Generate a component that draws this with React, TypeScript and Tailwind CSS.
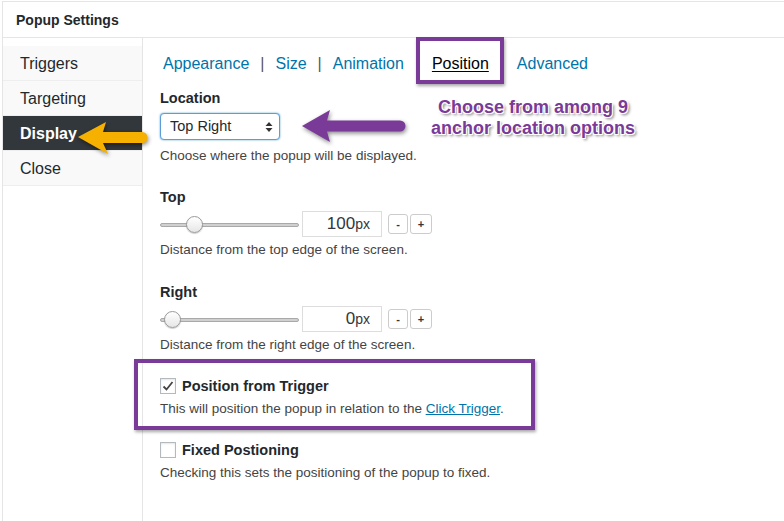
import React from "react"

const navItems = ["Triggers", "Targeting", "Display", "Close"]

function Slider({ pos }: { pos: number }) {
  return (
    <div className="relative h-[26px] w-[139px]">
      <div className="absolute left-0 right-0 top-[12px] h-[4px] rounded-full border border-[#a9a9a9] bg-[#d0d0d0]" />
      <div
        className="absolute top-[5px] h-[17px] w-[17px] rounded-full border border-[#9a9a9a] bg-gradient-to-b from-white to-[#e6e6e6] shadow-[0_1px_1px_rgba(0,0,0,0.2)]"
        style={{ left: pos }}
      />
    </div>
  )
}

function NumberRow({ value, pos }: { value: string; pos: number }) {
  return (
    <div className="mt-[4px] flex h-[26px] items-center">
      <Slider pos={pos} />
      <div className="ml-[3px] flex h-[26px] w-[80px] items-baseline justify-end border border-[#dddddd] bg-white pr-[11px] pt-[1px]">
        <span className="text-[17px] leading-[22px] text-[#32373c]">{value}</span>
        <span className="text-[14px] text-[#32373c]">px</span>
      </div>
      <button className="ml-[6px] flex h-[20px] w-[20px] items-center justify-center rounded-[3px] border border-[#cccccc] bg-white text-[11px] font-bold leading-none text-[#32373c]">
        -
      </button>
      <button className="ml-[2px] flex h-[20px] w-[22px] items-center justify-center rounded-[3px] border border-[#cccccc] bg-white text-[11px] font-bold leading-none text-[#32373c]">
        +
      </button>
    </div>
  )
}

function Checkbox({ checked }: { checked: boolean }) {
  return (
    <span className="flex h-[16px] w-[16px] items-center justify-center border border-[#b4b9be] bg-white shadow-[inset_0_1px_2px_rgba(0,0,0,0.1)]">
      {checked && (
        <svg width="12" height="12" viewBox="0 0 12 12">
          <path d="M1.5 6.5 L4.5 9.5 L10.5 2" fill="none" stroke="#444" strokeWidth="1.8" />
        </svg>
      )}
    </span>
  )
}

function App() {
  return (
    <div className="relative h-[521px] w-[784px] overflow-hidden bg-white font-['Liberation_Sans',Arial,sans-serif] text-[#23282d]">
      <div className="ml-[2px] mt-[1px] h-[520px] border-l border-t border-[#e5e5e5]">
        <div className="flex h-[36px] items-center border-b border-[#e5e5e5] pl-[13px] pt-[1px] text-[14px] font-bold">
          Popup Settings
        </div>
        <div className="flex h-full">
          <div className="w-[140px] shrink-0 border-r border-[#e5e5e5] pt-[8px]">
            {navItems.map((item) => (
              <div
                key={item}
                className={`flex h-[35px] items-center border-b border-[#eeeeee] pl-[17px] pt-[1px] text-[16px] ${
                  item === "Display" ? "bg-[#32373c] font-bold text-white" : "bg-[#f9f9f9] text-[#23282d]"
                }`}
              >
                {item}
              </div>
            ))}
          </div>
          <div className="flex-1 pl-[17px]">
            <div className="flex pl-[3px] pt-[15px] text-[16px] leading-[22px]">
              <span className="text-[#0073aa]">Appearance</span>
              <span className="mx-[11px] text-[#555]">|</span>
              <span className="text-[#0073aa]">Size</span>
              <span className="mx-[11px] text-[#555]">|</span>
              <span className="text-[#0073aa]">Animation</span>
              <span className="ml-[28px] text-black underline underline-offset-2">Position</span>
              <span className="ml-[28px] text-[#0073aa]">Advanced</span>
            </div>

            <div className="mt-[13px] text-[14.5px] font-bold leading-[20px]">Location</div>
            <div className="mt-[5px] flex h-[27px] w-[120px] items-center justify-between rounded-[4px] border border-[#5b9dd9] bg-white pl-[9px] pr-[6px] text-[14.5px] shadow-[0_0_2px_rgba(30,140,190,0.8)]">
              <span>Top Right</span>
              <svg width="8" height="12" viewBox="0 0 8 12">
                <path d="M4 1 L7.5 5 H0.5 Z M4 11 L7.5 7 H0.5 Z" fill="#333" />
              </svg>
            </div>
            <p className="mt-[7px] text-[13.5px] leading-[18px] text-[#444]">
              Choose where the popup will be displayed.
            </p>

            <div className="mt-[22px] text-[14.5px] font-bold leading-[20px]">Top</div>
            <NumberRow value="100" pos={26} />
            <p className="mt-[4px] text-[13.5px] leading-[18px] text-[#444]">
              Distance from the top edge of the screen.
            </p>

            <div className="mt-[23px] text-[14.5px] font-bold leading-[20px]">Right</div>
            <NumberRow value="0" pos={4} />
            <p className="mt-[4px] text-[13.5px] leading-[18px] text-[#444]">
              Distance from the right edge of the screen.
            </p>

            <div className="mt-[22px] flex items-center gap-[6px] text-[14.5px] font-bold leading-[20px]">
              <Checkbox checked />
              <span>Position from Trigger</span>
            </div>
            <p className="mt-[4px] text-[13.5px] leading-[18px] text-[#444]">
              This will position the popup in relation to the{" "}
              <span className="text-[#0073aa] underline">Click Trigger</span>.
            </p>

            <div className="mt-[22px] flex items-center gap-[6px] text-[14.5px] font-bold leading-[20px]">
              <Checkbox checked={false} />
              <span>Fixed Postioning</span>
            </div>
            <p className="mt-[4px] text-[13.5px] leading-[18px] text-[#444]">
              Checking this sets the positioning of the popup to fixed.
            </p>
          </div>
        </div>
      </div>

      {/* annotations */}
      <div className="absolute left-[416px] top-[37px] h-[47px] w-[88px] border-[4px] border-[#7a3b98] shadow-[1px_2px_3px_rgba(0,0,0,0.35)]" />
      <div className="absolute left-[134px] top-[359px] h-[71px] w-[401px] border-[4px] border-[#7a3b98] shadow-[1px_2px_3px_rgba(0,0,0,0.35)]" />

      <svg
        className="absolute left-[300px] top-[108px] drop-shadow-[1px_2px_2px_rgba(0,0,0,0.45)]"
        width="110"
        height="36"
        viewBox="0 0 110 36"
      >
        <path d="M2 18 L30 2 L27 12.5 L100 12.5 A5.5 5.5 0 0 1 100 23.5 L27 23.5 L30 34 Z" fill="#7a3b98" />
      </svg>

      <svg
        className="absolute left-[76px] top-[120px] drop-shadow-[1px_2px_2px_rgba(0,0,0,0.45)]"
        width="74"
        height="36"
        viewBox="0 0 74 36"
      >
        <path d="M2 17 L30 2 L27 12 L66 12 A5.5 5.5 0 0 1 66 23 L27 23 L32 34 Z" fill="#f5b000" />
      </svg>

      <div className="absolute left-[431px] top-[97px] text-center text-[18px] font-bold leading-[21px] text-[#7a3b98] [text-shadow:-1px_-1px_0_#fff,1px_-1px_0_#fff,-1px_1px_0_#fff,1px_1px_0_#fff,2px_2px_3px_rgba(0,0,0,0.55)]">
        Choose from among 9
        <br />
        anchor location options
      </div>
    </div>
  )
}

export default App
